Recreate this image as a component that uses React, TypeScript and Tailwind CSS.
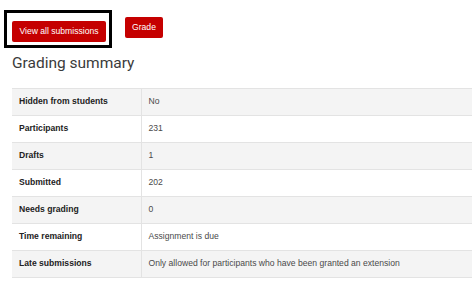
const rows: [string, string][] = [
  ["Hidden from students", "No"],
  ["Participants", "231"],
  ["Drafts", "1"],
  ["Submitted", "202"],
  ["Needs grading", "0"],
  ["Time remaining", "Assignment is due"],
  ["Late submissions", "Only allowed for participants who have been granted an extension"],
];

export default function App() {
  return (
    <div className="w-[474px] h-[292px] bg-white overflow-hidden font-['Liberation_Sans',Arial,sans-serif]">
      <div className="flex items-start pt-[10px] pl-[4px]">
        <div className="border-[3px] border-black pt-[4px] pb-[3px] pl-[5px] pr-[3px]">
          <button className="h-[21px] w-[94px] rounded-[2px] bg-[#c50000] text-white text-[8.6px] leading-none">
            View all submissions
          </button>
        </div>
        <button className="ml-[13px] mt-[7px] h-[21px] w-[38px] rounded-[2px] bg-[#c50000] text-white text-[8.6px] leading-none">
          Grade
        </button>
      </div>
      <h2 className="ml-[12px] mt-[4px] font-['Roboto',sans-serif] text-[15.5px] leading-[22px] text-[#3b3b3b]">
        Grading summary
      </h2>
      <table className="ml-[12px] mt-[14px] w-[460px] border-collapse text-[8.6px]">
        <tbody>
          {rows.map(([k, v], i) => (
            <tr
              key={k}
              className={`h-[27px] border-y border-[#e3e3e3] ${i % 2 === 0 ? "bg-[#f4f4f4]" : "bg-white"}`}
            >
              <td className="w-[129px] pl-[7px] font-bold text-[#222] border-r border-[#e3e3e3]">{k}</td>
              <td className="pl-[7px] text-[#4a4a4a]">{v}</td>
            </tr>
          ))}
        </tbody>
      </table>
    </div>
  );
}
